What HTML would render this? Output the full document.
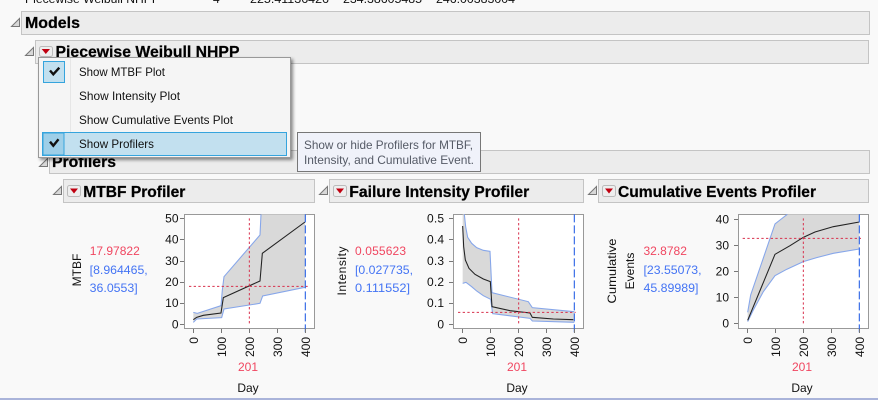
<!DOCTYPE html>
<html><head><meta charset="utf-8"><style>
html,body{margin:0;padding:0;background:#f9f9f9;width:878px;height:400px;overflow:hidden}
svg{display:block}
text{font-family:"Liberation Sans",sans-serif;font-size:12px}
.t{font-weight:bold;font-size:16px;fill:#000;stroke:#000;stroke-width:.25}
.n{fill:#111}
.r{fill:#f04660}
.b{fill:#4474f4}
.m{fill:#111}
.bar{fill:#ececec;stroke:#c4c4c4;stroke-width:1}
.tri{fill:#d8d8d8;stroke:#777;stroke-width:1}
.tk{stroke:#777;stroke-width:1;fill:none}
.box{fill:#fff;stroke:#999;stroke-width:1}
.band{fill:#d9d9d9}
.up{fill:none;stroke:#86a6ea;stroke-width:3.2}
.ln{fill:none;stroke:#222;stroke-width:3.2}
.rd{fill:none;stroke:#d8304c;stroke-width:3;stroke-dasharray:7 7}
.bd{fill:none;stroke:#2f66e6;stroke-width:3.4;stroke-dasharray:24 9}
</style></head><body>
<svg width="878" height="400" viewBox="0 0 878 400" xmlns="http://www.w3.org/2000/svg">
<defs>
<filter id="s" x="-5%" y="-5%" width="115%" height="115%"><feDropShadow dx="2" dy="2" stdDeviation="1.5" flood-color="#000" flood-opacity=".45"/></filter>
</defs>
<rect width="878" height="400" fill="#f9f9f9"/>
<!-- top cut-off row -->
<text x="25" y="3" class="m" textLength="135" lengthAdjust="spacingAndGlyphs">Piecewise Weibull NHPP</text>
<text x="213" y="3" class="m">4</text>
<text x="250" y="3" class="m" textLength="79" lengthAdjust="spacingAndGlyphs">225.41136426</text>
<text x="343" y="3" class="m" textLength="79" lengthAdjust="spacingAndGlyphs">234.38605485</text>
<text x="436" y="3" class="m" textLength="79" lengthAdjust="spacingAndGlyphs">246.00383004</text>

<!-- Headers -->
<rect class="bar" x="21.5" y="11.5" width="848" height="23"/>
<path class="tri" d="M11.5 26.5L19.5 18.5V26.5Z"/>
<text x="25" y="28" class="t" textLength="55" lengthAdjust="spacingAndGlyphs">Models</text>

<rect class="bar" x="35.5" y="40.5" width="833" height="23"/>
<path class="tri" d="M25.5 55.5L33.5 47.5V55.5Z"/>
<rect x="39.5" y="46.5" width="13" height="10" rx="2" fill="#eee" stroke="#bbb"/>
<path d="M41.7 49H50L45.8 54Z" fill="#c00010"/>
<text x="55.5" y="57" class="t" textLength="184" lengthAdjust="spacingAndGlyphs">Piecewise Weibull NHPP</text>

<rect class="bar" x="49.5" y="150.5" width="820" height="23"/>
<path class="tri" d="M39.5 166.5L47.5 158.5V166.5Z"/>
<text x="52" y="167" class="t" textLength="64" lengthAdjust="spacingAndGlyphs">Profilers</text>

<!-- Profiler headers -->
<rect class="bar" x="63.5" y="179.5" width="251" height="23"/>
<path class="tri" d="M53.5 194.5L61.5 186.5V194.5Z"/>
<rect x="67.5" y="185.5" width="13" height="11" rx="2" fill="#eee" stroke="#bbb"/>
<path d="M70 188.5H78L74 193.5Z" fill="#c00010"/>
<text x="83.3" y="197" class="t" textLength="102" lengthAdjust="spacingAndGlyphs">MTBF Profiler</text>

<rect class="bar" x="329.5" y="179.5" width="254" height="23"/>
<path class="tri" d="M319.5 194.5L327.5 186.5V194.5Z"/>
<rect x="333.5" y="185.5" width="13" height="11" rx="2" fill="#eee" stroke="#bbb"/>
<path d="M336 188.5H344L340 193.5Z" fill="#c00010"/>
<text x="349.3" y="197" class="t" textLength="180" lengthAdjust="spacingAndGlyphs">Failure Intensity Profiler</text>

<rect class="bar" x="598.5" y="179.5" width="270" height="23"/>
<path class="tri" d="M588.5 194.5L596.5 186.5V194.5Z"/>
<rect x="602.5" y="185.5" width="13" height="11" rx="2" fill="#eee" stroke="#bbb"/>
<path d="M605 188.5H613L609 193.5Z" fill="#c00010"/>
<text x="618" y="197" class="t" textLength="198" lengthAdjust="spacingAndGlyphs">Cumulative Events Profiler</text>

<!-- Plot 1 -->
<rect class="box" x="184.5" y="214.5" width="130" height="114"/>
<g transform="translate(40 175) scale(.33333)">
<path class="band" d="M460 412L472 415L543 392L547 345L552 305L660 180L663 118H795V337L668 363L660 385L552 402L545 428L470 432L460 442Z"/>
<path class="up" d="M460 412L472 415L543 392L547 345L552 305L660 180L663 118"/>
<path class="up" d="M460 442L470 432L545 428L552 402L660 385L668 363L795 337"/>
<path class="ln" d="M460 434L470 427L490 421L543 414L550 368L660 318L667 235L795 141"/>
<path class="rd" d="M447 334H803M628 130V452"/>
<path class="bd" d="M796 118V480"/>
</g>
<path class="tk" d="M180 218.5h4M180 239.5h4M180 261.5h4M180 282.5h4M180 303.5h4M180 324.5h4M193.5 329v4M221.5 329v4M249.5 329v4M277.5 329v4M305.5 329v4"/>
<g class="n" text-anchor="end">
<text x="178.5" y="222.5">50</text><text x="178.5" y="243.5">40</text><text x="178.5" y="265">30</text><text x="178.5" y="286">20</text><text x="178.5" y="307">10</text><text x="178.5" y="328.5">0</text>
</g>
<g class="n" text-anchor="end">
<text transform="translate(198 337) rotate(-90)">0</text><text transform="translate(226 337) rotate(-90)">100</text><text transform="translate(254 337) rotate(-90)">200</text><text transform="translate(282 337) rotate(-90)">300</text><text transform="translate(310 337) rotate(-90)">400</text>
</g>
<text x="248" y="371" class="r" text-anchor="middle">201</text>
<text x="248" y="392" class="n" text-anchor="middle">Day</text>
<text transform="translate(81 270) rotate(-90)" class="n" text-anchor="middle">MTBF</text>
<text x="89.7" y="255" class="r">17.97822</text>
<text x="89.7" y="274" class="b" textLength="58" lengthAdjust="spacingAndGlyphs">[8.964465,</text>
<text x="89.7" y="292" class="b" textLength="48" lengthAdjust="spacingAndGlyphs">36.0553]</text>

<!-- Plot 2 -->
<rect class="box" x="453.5" y="214.5" width="130" height="114"/>
<g transform="translate(320 175) scale(.33333)">
<path class="band" d="M428 325V118H433L437 155L443 187L455 205L470 218L490 226L510 229L516 353L625 380L637 398L763 410V442L637 438L630 430L518 416L512 373L490 362L470 348L455 335L438 322Z"/>
<path class="up" d="M433 118L437 155L443 187L455 205L470 218L490 226L510 229L516 353L625 380L637 398L763 410"/>
<path class="up" d="M428 325L438 322L455 335L470 348L490 362L512 373L518 416L630 430L637 438L763 442"/>
<path class="ln" d="M428 153L431 215L436 255L447 280L465 298L490 312L511 320L516 395L570 407L630 414L637 427L700 432L760 434"/>
<path class="rd" d="M414 412H767M596 130V452"/>
<path class="bd" d="M763 118V480"/>
</g>
<path class="tk" d="M449 218.5h4M449 239.5h4M449 261.5h4M449 282.5h4M449 303.5h4M449 324.5h4M462.5 329v4M490.5 329v4M518.5 329v4M546.5 329v4M574.5 329v4"/>
<g class="n" text-anchor="end">
<text x="444" y="222.5" textLength="17">0.5</text><text x="444" y="243.5" textLength="17">0.4</text><text x="444" y="265" textLength="17">0.3</text><text x="444" y="286" textLength="17">0.2</text><text x="444" y="307" textLength="17">0.1</text><text x="444" y="328.5">0</text>
</g>
<g class="n" text-anchor="end">
<text transform="translate(467 337) rotate(-90)">0</text><text transform="translate(495 337) rotate(-90)">100</text><text transform="translate(523 337) rotate(-90)">200</text><text transform="translate(551 337) rotate(-90)">300</text><text transform="translate(579 337) rotate(-90)">400</text>
</g>
<text x="517" y="371" class="r" text-anchor="middle">201</text>
<text x="517" y="392" class="n" text-anchor="middle">Day</text>
<text transform="translate(346 271) rotate(-90)" class="n" text-anchor="middle" textLength="49">Intensity</text>
<text x="355" y="255" class="r" textLength="51">0.055623</text>
<text x="355" y="274" class="b" textLength="58" lengthAdjust="spacingAndGlyphs">[0.027735,</text>
<text x="355" y="292" class="b" textLength="55" lengthAdjust="spacingAndGlyphs">0.111552]</text>

<!-- Plot 3 -->
<rect class="box" x="738.5" y="214.5" width="130" height="114"/>
<g transform="translate(590 175) scale(.33333)">
<path class="band" d="M473 412L482 360L555 147L570 135L592 118H808V222L730 235L680 248L640 260L590 283L555 302L520 350L490 405L473 440Z"/>
<path class="up" d="M473 412L482 360L555 147L570 135L592 118"/>
<path class="up" d="M473 440L490 405L520 350L555 302L590 283L640 260L680 248L730 235L808 222"/>
<path class="ln" d="M473 436L555 238L600 212L640 187L675 171L730 155L808 141"/>
<path class="rd" d="M458 190H813M640 130V452"/>
<path class="bd" d="M808 118V480"/>
</g>
<path class="tk" d="M734 219.5h4M734 245.5h4M734 271.5h4M734 297.5h4M734 323.5h4M747.5 329v4M775.5 329v4M803.5 329v4M831.5 329v4M859.5 329v4"/>
<g class="n" text-anchor="end">
<text x="729" y="223.5">40</text><text x="729" y="249.5">30</text><text x="729" y="275.5">20</text><text x="729" y="301.5">10</text><text x="729" y="327.5">0</text>
</g>
<g class="n" text-anchor="end">
<text transform="translate(752 337) rotate(-90)">0</text><text transform="translate(780 337) rotate(-90)">100</text><text transform="translate(808 337) rotate(-90)">200</text><text transform="translate(836 337) rotate(-90)">300</text><text transform="translate(864 337) rotate(-90)">400</text>
</g>
<text x="802" y="371" class="r" text-anchor="middle">201</text>
<text x="802" y="392" class="n" text-anchor="middle">Day</text>
<text transform="translate(616 271) rotate(-90)" class="n" text-anchor="middle" textLength="65" lengthAdjust="spacingAndGlyphs">Cumulative</text>
<text transform="translate(634 271) rotate(-90)" class="n" text-anchor="middle">Events</text>
<text x="643.5" y="255" class="r">32.8782</text>
<text x="643.5" y="274" class="b" textLength="58" lengthAdjust="spacingAndGlyphs">[23.55073,</text>
<text x="643.5" y="292" class="b" textLength="55" lengthAdjust="spacingAndGlyphs">45.89989]</text>

<!-- bottom line -->
<rect x="0" y="398" width="878" height="2" fill="#aab4da"/>

<!-- Menu -->
<rect x="38.5" y="57.5" width="252" height="100" fill="#f5f5f5" stroke="#999" filter="url(#s)"/>
<rect x="70" y="58" width="1" height="99" fill="#e6e6e6"/>
<rect x="43.5" y="61.5" width="21" height="21" fill="#c2e0ef" stroke="#35a4dd"/>
<path d="M50 70.5L53.3 74.3L59.3 67.7" fill="none" stroke="#111" stroke-width="2.4"/>
<text x="79" y="76" class="m" textLength="86" lengthAdjust="spacingAndGlyphs">Show MTBF Plot</text>
<text x="79" y="100" class="m" textLength="101" lengthAdjust="spacingAndGlyphs">Show Intensity Plot</text>
<text x="79" y="124" class="m" textLength="154" lengthAdjust="spacingAndGlyphs">Show Cumulative Events Plot</text>
<rect x="42.5" y="132.5" width="244" height="23" fill="#c2e0ef" stroke="#35a4dd"/>
<rect x="43" y="133" width="21" height="22" fill="#9ecfe8" stroke="#35a4dd"/>
<path d="M50 141.7L53.3 145.7L58.5 139.3" fill="none" stroke="#111" stroke-width="2.4"/>
<text x="79" y="148" class="m" textLength="75" lengthAdjust="spacingAndGlyphs">Show Profilers</text>

<!-- Tooltip -->
<rect x="297.5" y="132.5" width="183" height="39" fill="#f0f2fa" stroke="#777"/>
<text x="304" y="149" fill="#555a66" textLength="169" lengthAdjust="spacingAndGlyphs">Show or hide Profilers for MTBF,</text>
<text x="304" y="164" fill="#555a66" textLength="170" lengthAdjust="spacingAndGlyphs">Intensity, and Cumulative Event.</text>
</svg>
</body></html>
